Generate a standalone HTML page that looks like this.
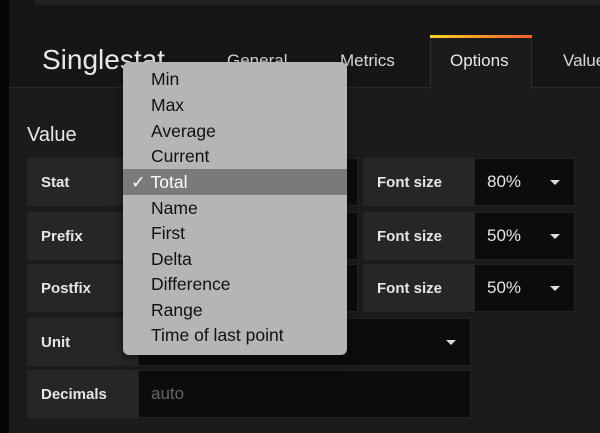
<!DOCTYPE html>
<html><head><style>
*{margin:0;padding:0;box-sizing:border-box}
body{width:600px;height:433px;overflow:hidden;background:#1b1b1d;font-family:"Liberation Sans",sans-serif;position:relative;color:#d8d9da}
.a{position:absolute}
.lbl{background:#262628;color:#e6e6e6;font-weight:bold;font-size:15px;padding-left:14px;display:flex;align-items:center;border-radius:3px 0 0 3px}
.inp{background:#0b0c0e;border:1px solid #222;font-size:17px;display:flex;align-items:center;padding-left:12px;color:#e6e6e6}
.caret{position:absolute;right:14px;top:50%;margin-top:-2px;border-left:5px solid transparent;border-right:5px solid transparent;border-top:5px solid #ddd}
.dd{left:123px;top:62px;width:224px;height:293px;background:#b5b5b5;border-radius:6px;box-shadow:0 3px 10px rgba(0,0,0,.5)}
.it{position:absolute;left:0;width:224px;height:26px;line-height:26px;padding-left:28px;font-size:17.5px;color:#111}
</style></head><body>
<div class="a" style="left:0;top:0;width:9px;height:433px;background:#050505"></div>
<div class="a" style="left:9px;top:0;width:591px;height:88px;background:#161618"></div>
<div class="a" style="left:35px;top:0;width:565px;height:5px;background:#222224"></div>
<div class="a" style="left:9px;top:87px;width:591px;height:1px;background:#2a2a2c"></div>
<div class="a" style="left:42px;top:44px;font-size:28px;color:#e8e8e8">Singlestat</div>
<div class="a" style="left:227px;top:51px;font-size:17px;color:#d8d9da">General</div>
<div class="a" style="left:340px;top:51px;font-size:17px;color:#d8d9da">Metrics</div>
<div class="a" style="left:430px;top:35px;width:102px;height:54px;background:#1b1b1d;border:1px solid #2e2e30;border-bottom:none"></div>
<div class="a" style="left:430px;top:35px;width:102px;height:3px;background:linear-gradient(90deg,#f9d423,#f1592a)"></div>
<div class="a" style="left:450px;top:51px;font-size:17px;color:#e8e8e8">Options</div>
<div class="a" style="left:563px;top:51px;font-size:17px;color:#d8d9da">Value</div>
<div class="a" style="left:27px;top:124px;font-size:20px;color:#e8e8e8">Value</div>

<div class="a lbl" style="left:27px;top:158px;width:111px;height:48px">Stat</div>
<div class="a inp" style="left:138px;top:158px;width:220px;height:48px"></div>
<div class="a lbl" style="left:363px;top:158px;width:111px;height:48px">Font size</div>
<div class="a inp" style="left:474px;top:158px;width:101px;height:48px">80%<span class="caret"></span></div>

<div class="a lbl" style="left:27px;top:212px;width:111px;height:48px">Prefix</div>
<div class="a inp" style="left:138px;top:212px;width:220px;height:48px"></div>
<div class="a lbl" style="left:363px;top:212px;width:111px;height:48px">Font size</div>
<div class="a inp" style="left:474px;top:212px;width:101px;height:48px">50%<span class="caret"></span></div>

<div class="a lbl" style="left:27px;top:264px;width:111px;height:48px">Postfix</div>
<div class="a inp" style="left:138px;top:264px;width:220px;height:48px"></div>
<div class="a lbl" style="left:363px;top:264px;width:111px;height:48px">Font size</div>
<div class="a inp" style="left:474px;top:264px;width:101px;height:48px">50%<span class="caret"></span></div>

<div class="a lbl" style="left:27px;top:318px;width:111px;height:48px">Unit</div>
<div class="a inp" style="left:138px;top:318px;width:333px;height:48px"><span class="caret"></span></div>
<div class="a lbl" style="left:27px;top:370px;width:111px;height:48px">Decimals</div>
<div class="a inp" style="left:138px;top:370px;width:333px;height:48px;color:#666">auto</div>

<div class="a dd">
<div class="it" style="top:4px">Min</div>
<div class="it" style="top:30px">Max</div>
<div class="it" style="top:56px">Average</div>
<div class="it" style="top:81px">Current</div>
<div class="it" style="top:107px;background:#7a7a7b;color:#fff;padding-left:8px">✓&nbsp;Total</div>
<div class="it" style="top:133px">Name</div>
<div class="it" style="top:158px">First</div>
<div class="it" style="top:184px">Delta</div>
<div class="it" style="top:209px">Difference</div>
<div class="it" style="top:235px">Range</div>
<div class="it" style="top:260px">Time of last point</div>
</div>
</body></html>
